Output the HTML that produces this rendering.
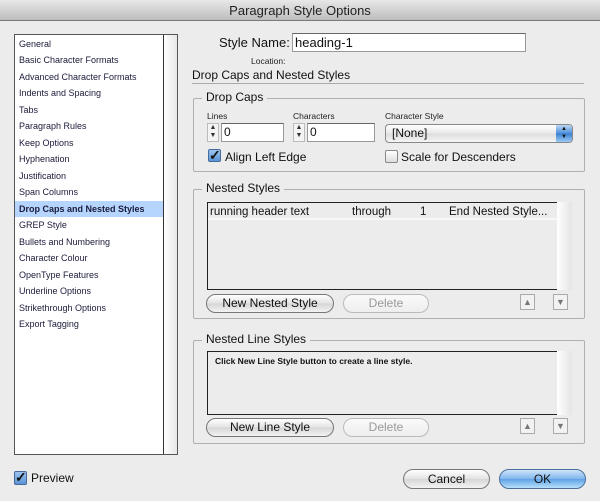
<!DOCTYPE html>
<html><head><meta charset="utf-8"><style>
*{box-sizing:border-box;margin:0;padding:0}
body{width:600px;height:501px;background:#ececec;font-family:"Liberation Sans",sans-serif;color:#111;position:relative;overflow:hidden}
.a{position:absolute;white-space:nowrap}
.title{left:0;top:0;width:600px;height:21px;background:linear-gradient(#e8e8e8,#bdbdbd);border-bottom:1px solid #7a7a7a;text-align:center;font-size:13px;line-height:21px;color:#222}
.list{left:14px;top:34px;width:164px;height:421px;border:1px solid #555;background:#fff}
.sb{left:163px;top:35px;width:14px;height:419px;background:linear-gradient(90deg,#fff,#e6e6e6);border-left:1px solid #333}
.it{left:19px;font-size:9px;color:#1a1a3a}
.sel{left:15px;top:201px;width:148px;height:16px;background:#b5d5ff}
.grp{border:1px solid #b0b0b0;border-radius:2px}
.leg{font-size:12px;background:#ececec;padding:0 4px}
.lab{font-size:8.5px;color:#222}
.inp{background:#fff;border:1px solid #999;border-top-color:#666;font-size:12px;padding-left:2px;line-height:17px}
.spin{width:12px;height:19px;font-size:7px;line-height:8px;text-align:center;color:#333;border:1px solid #bbb;background:#f4f4f4}
.cb{width:13px;height:13px;border:1px solid #888;border-radius:2px;background:linear-gradient(#fff,#ddd)}
.cbon{background:linear-gradient(#9cc4ef,#5a94d6);border-color:#466a9a;color:#111;font-size:14px;line-height:11px;text-align:center;font-weight:bold}
.btn{height:19px;border:1px solid #777;border-radius:10px;background:linear-gradient(#fff,#e2e2e2 50%,#d6d6d6 51%,#f3f3f3);font-size:12px;text-align:center;line-height:17px}
.dis{border-color:#bbb;color:#999;background:linear-gradient(#fafafa,#eee)}
.box{background:#ececec;border:1px solid #222;border-right:none}
.bsb{width:15px;background:linear-gradient(90deg,#fff,#e4e4e4)}
.arr{width:15px;height:16px;border:1px solid #aaa;background:#f2f2f2;font-size:9px;text-align:center;line-height:14px;color:#777}
</style></head><body>
<div class="a title">Paragraph Style Options</div>
<div class="a list"></div>
<div class="a sb"></div>
<div class="a sel"></div>
<div class="a it" style="top:39px">General</div>
<div class="a it" style="top:55px">Basic Character Formats</div>
<div class="a it" style="top:72px">Advanced Character Formats</div>
<div class="a it" style="top:88px">Indents and Spacing</div>
<div class="a it" style="top:105px">Tabs</div>
<div class="a it" style="top:121px">Paragraph Rules</div>
<div class="a it" style="top:138px">Keep Options</div>
<div class="a it" style="top:154px">Hyphenation</div>
<div class="a it" style="top:171px">Justification</div>
<div class="a it" style="top:187px">Span Columns</div>
<div class="a it" style="top:204px;font-weight:bold">Drop Caps and Nested Styles</div>
<div class="a it" style="top:220px">GREP Style</div>
<div class="a it" style="top:237px">Bullets and Numbering</div>
<div class="a it" style="top:253px">Character Colour</div>
<div class="a it" style="top:270px">OpenType Features</div>
<div class="a it" style="top:286px">Underline Options</div>
<div class="a it" style="top:303px">Strikethrough Options</div>
<div class="a it" style="top:319px">Export Tagging</div>

<div class="a cb cbon" style="left:14px;top:471px;width:13px;height:14px">✓</div>
<div class="a" style="left:31px;top:471px;font-size:12px">Preview</div>

<div class="a" style="left:219px;top:35px;font-size:13px">Style Name:</div>
<div class="a inp" style="left:292px;top:33px;width:234px;height:19px;font-size:13px">heading-1</div>
<div class="a lab" style="left:251px;top:56px">Location:</div>
<div class="a" style="left:192px;top:68px;font-size:12px">Drop Caps and Nested Styles</div>
<div class="a" style="left:192px;top:83px;width:392px;height:1px;background:#aaa"></div>

<div class="a grp" style="left:193px;top:98px;width:392px;height:74px"></div>
<div class="a leg" style="left:202px;top:90px">Drop Caps</div>
<div class="a lab" style="left:207px;top:111px">Lines</div>
<div class="a spin" style="left:207px;top:123px">▲<br>▼</div>
<div class="a inp" style="left:221px;top:123px;width:63px;height:19px">0</div>
<div class="a lab" style="left:293px;top:111px">Characters</div>
<div class="a spin" style="left:293px;top:123px">▲<br>▼</div>
<div class="a inp" style="left:307px;top:123px;width:68px;height:19px">0</div>
<div class="a lab" style="left:385px;top:111px">Character Style</div>
<div class="a" style="left:385px;top:124px;width:188px;height:19px;border:1px solid #888;border-radius:4px;background:linear-gradient(#fff,#e8e8e8 50%,#ddd 51%,#f5f5f5);font-size:12px;line-height:17px;padding-left:6px">[None]</div>
<div class="a" style="left:556px;top:125px;width:16px;height:17px;border-radius:0 3px 3px 0;background:linear-gradient(#bcd8f5,#4c8fdb 50%,#3b7fd0 51%,#9ccaf5);font-size:6px;line-height:8px;text-align:center;color:#111">▲<br>▼</div>
<div class="a cb cbon" style="left:208px;top:149px">✓</div>
<div class="a" style="left:225px;top:150px;font-size:12px">Align Left Edge</div>
<div class="a cb" style="left:385px;top:150px"></div>
<div class="a" style="left:401px;top:150px;font-size:12px">Scale for Descenders</div>

<div class="a grp" style="left:193px;top:189px;width:392px;height:130px"></div>
<div class="a leg" style="left:202px;top:181px">Nested Styles</div>
<div class="a box" style="left:207px;top:202px;width:351px;height:88px"></div>
<div class="a bsb" style="left:557px;top:202px;height:88px"></div>
<div class="a" style="left:208px;top:218px;width:349px;height:2px;background:#f8f8f8"></div>
<div class="a" style="left:210px;top:206px;font-size:11.5px">running header text</div>
<div class="a" style="left:352px;top:206px;font-size:11.5px">through</div>
<div class="a" style="left:420px;top:206px;font-size:11.5px">1</div>
<div class="a" style="left:449px;top:206px;font-size:11.5px">End Nested Style...</div>
<div class="a btn" style="left:206px;top:294px;width:128px">New Nested Style</div>
<div class="a btn dis" style="left:343px;top:294px;width:86px">Delete</div>
<div class="a arr" style="left:520px;top:294px">▲</div>
<div class="a arr" style="left:553px;top:294px">▼</div>

<div class="a grp" style="left:193px;top:340px;width:392px;height:104px"></div>
<div class="a leg" style="left:202px;top:332px">Nested Line Styles</div>
<div class="a box" style="left:207px;top:351px;width:351px;height:64px"></div>
<div class="a bsb" style="left:557px;top:351px;height:64px"></div>
<div class="a" style="left:215px;top:356px;font-size:8.5px;font-weight:bold">Click New Line Style button to create a line style.</div>
<div class="a btn" style="left:206px;top:418px;width:128px">New Line Style</div>
<div class="a btn dis" style="left:343px;top:418px;width:86px">Delete</div>
<div class="a arr" style="left:520px;top:418px">▲</div>
<div class="a arr" style="left:553px;top:418px">▼</div>

<div class="a btn" style="left:403px;top:469px;width:87px;height:20px;line-height:18px">Cancel</div>
<div class="a btn" style="left:499px;top:469px;width:87px;height:20px;line-height:18px;border-color:#4a6f9c;background:linear-gradient(#cfe6fb,#7fb6ec 50%,#5fa2e6 51%,#b8e0fb)">OK</div>
</body></html>
